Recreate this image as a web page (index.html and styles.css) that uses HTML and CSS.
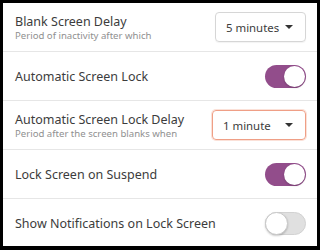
FILE: index.html
```html
<!DOCTYPE html>
<html>
<head>
<meta charset="utf-8">
<link rel="stylesheet" href="styles.css">
</head>
<body>
<div class="panel">
  <div class="row">
    <div class="labels">
      <div class="title">Blank Screen Delay</div>
      <div class="sub">Period of inactivity after which</div>
    </div>
    <div class="dropdown dd1"><span>5 minutes</span><span class="caret"></span></div>
  </div>
  <div class="row">
    <div class="labels"><div class="title">Automatic Screen Lock</div></div>
    <div class="toggle on"><span class="knob"></span></div>
  </div>
  <div class="row">
    <div class="labels">
      <div class="title">Automatic Screen Lock Delay</div>
      <div class="sub">Period after the screen blanks when</div>
    </div>
    <div class="dropdown dd2 focus"><span>1 minute</span><span class="caret"></span></div>
  </div>
  <div class="row">
    <div class="labels"><div class="title">Lock Screen on Suspend</div></div>
    <div class="toggle on"><span class="knob"></span></div>
  </div>
  <div class="row last">
    <div class="labels"><div class="title">Show Notifications on Lock Screen</div></div>
    <div class="toggle off"><span class="knob"></span></div>
  </div>
</div>
</body>
</html>
```
FILE: styles.css
```css
html, body {
  margin: 0;
  padding: 0;
  background: #000;
}
body {
  width: 320px;
  height: 250px;
  overflow: hidden;
  font-family: "Noto Sans", "Open Sans", sans-serif;
}
.panel {
  margin: 3px 3px 0 3px;
  width: 314px;
  height: 243px;
  background: #fff;
  display: flex;
  flex-direction: column;
}
.row {
  height: 48px;
  border-bottom: 1px solid #e6e6e6;
  display: flex;
  align-items: center;
  justify-content: space-between;
  padding: 0 11px 0 12px;
  flex-shrink: 0;
}
.row.last {
  border-bottom: none;
}
.labels {
  padding-top: 1px;
}
.title {
  font-size: 12.5px;
  color: #3c3c3c;
  line-height: 15px;
}
.sub {
  font-size: 9.6px;
  color: #909090;
  line-height: 12px;
  margin-top: 1px;
}
.dropdown {
  box-sizing: border-box;
  height: 30px;
  border: 1px solid #d6d6d6;
  border-radius: 4px;
  display: flex;
  align-items: center;
  justify-content: space-between;
  padding: 0 12px 0 10px;
  font-size: 11.4px;
  color: #3c3c3c;
  box-shadow: 0 1px 1px rgba(0,0,0,0.05);
}
.dd1 {
  width: 91px;
}
.dd2 {
  width: 94px;
}
.dropdown.focus {
  border: 1px solid #ef9f86;
  box-shadow: 0 0 0 1px #fbe1d8;
}
.caret {
  width: 0;
  height: 0;
  border-left: 4px solid transparent;
  border-right: 4px solid transparent;
  border-top: 4px solid #333;
}
.toggle {
  box-sizing: border-box;
  width: 41px;
  height: 23px;
  border-radius: 12px;
  position: relative;
}
.toggle.on {
  background: #924d8b;
}
.toggle.off {
  background: #e0e0e0;
  border: 1px solid #d2d2d2;
}
.knob {
  position: absolute;
  top: 1px;
  width: 21px;
  height: 21px;
  border-radius: 50%;
  background: #fff;
  box-shadow: 0 1px 2px rgba(0,0,0,0.2);
}
.toggle.on .knob {
  right: 1px;
}
.toggle.off .knob {
  left: -1px;
  top: -1px;
  width: 23px;
  height: 23px;
  border: 1px solid #c8c8c8;
  box-sizing: border-box;
}
```
